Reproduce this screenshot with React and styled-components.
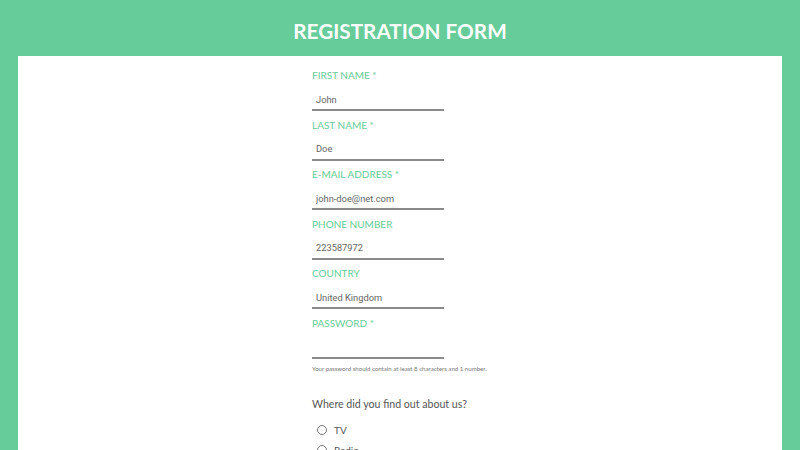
import styled, { createGlobalStyle } from "styled-components";

const GlobalStyle = createGlobalStyle`
  html, body {
    margin: 0;
    padding: 0;
    background: #66cc99;
    font-family: Lato, "Open Sans", sans-serif;
  }
`;

const Page = styled.div`
  min-height: 100vh;
  display: flex;
  flex-direction: column;
`;

const Header = styled.h1`
  margin: 0;
  height: 56px;
  padding-top: 5px;
  box-sizing: border-box;
  display: flex;
  align-items: center;
  justify-content: center;
  color: #fff;
  font-size: 20.7px;
  font-weight: 700;
`;

const Panel = styled.main`
  flex: 1;
  margin: 0 18px;
  background: #fff;
  padding-top: 11px;
  min-height: 500px;
`;

const Form = styled.form`
  width: 176px;
  margin: 0 auto;
  display: flex;
  flex-direction: column;
`;

const Field = styled.div`
  display: flex;
  flex-direction: column;
  margin-bottom: 5.5px;
`;

const Label = styled.label`
  font-size: 10px;
  line-height: 16px;
  color: #66cc99;
  text-transform: uppercase;
`;

const Input = styled.input`
  box-sizing: border-box;
  width: 132px;
  height: 28px;
  padding: 6px 4px 0;
  border: none;
  border-bottom: 2px solid #8a8a8a;
  outline: none;
  font-family: Roboto, "Liberation Sans", sans-serif;
  font-size: 9.3px;
  color: #666;
  background: transparent;
`;

const Hint = styled.small`
  display: block;
  font-size: 6.1px;
  line-height: 10px;
  color: #777;
  white-space: nowrap;
`;

const Question = styled.p`
  margin: 23px 0 0;
  font-size: 10.6px;
  line-height: 14px;
  color: #555;
  white-space: nowrap;
`;

const Options = styled.div`
  margin-top: 9px;
  display: flex;
  flex-direction: column;
`;

const Option = styled.label`
  display: flex;
  align-items: center;
  height: 20px;
  gap: 7px;
  padding-left: 5px;
  font-size: 10px;
  color: #555;
`;

const Radio = styled.input`
  appearance: none;
  margin: 0;
  width: 10px;
  height: 10px;
  border: 1px solid #777;
  border-radius: 50%;
  box-sizing: border-box;
`;

const fields = [
  { label: "First name *", value: "John" },
  { label: "Last name *", value: "Doe" },
  { label: "E-mail address *", value: "john-doe@net.com" },
  { label: "Phone number", value: "223587972" },
  { label: "Country", value: "United Kingdom" },
  { label: "Password *", value: "", type: "password" },
];

export default function App() {
  return (
    <>
      <GlobalStyle />
      <Page>
        <Header>REGISTRATION FORM</Header>
        <Panel>
          <Form onSubmit={(e) => e.preventDefault()}>
            {fields.map((f) => (
              <Field key={f.label}>
                <Label>{f.label}</Label>
                <Input type={f.type || "text"} defaultValue={f.value} />
              </Field>
            ))}
            <Hint>Your password should contain at least 8 characters and 1 number.</Hint>
            <Question>Where did you find out about us?</Question>
            <Options>
              {["TV", "Radio", "Internet", "Other"].map((o) => (
                <Option key={o}>
                  <Radio type="radio" name="source" />
                  {o}
                </Option>
              ))}
            </Options>
          </Form>
        </Panel>
      </Page>
    </>
  );
}
